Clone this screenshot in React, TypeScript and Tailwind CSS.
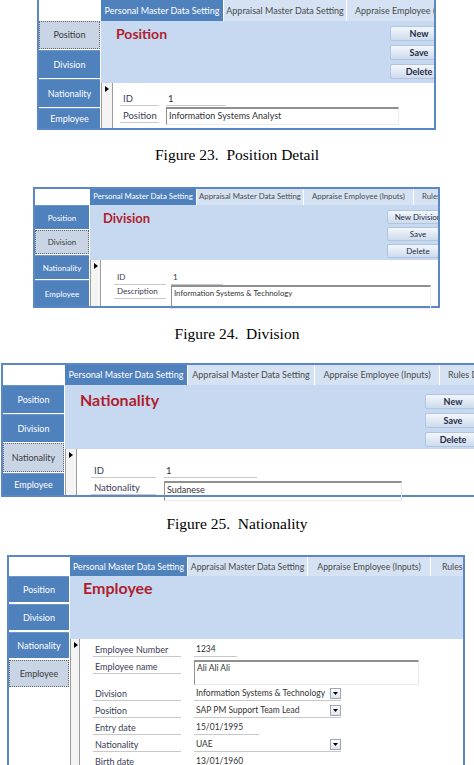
import clsx from "clsx";
import type { ReactNode } from "react";

function Tri() {
  return (
    <svg width="4" height="6" viewBox="0 0 4 6" className="block">
      <path d="M0 0L4 3L0 6Z" fill="#000" />
    </svg>
  );
}

function NavItem({ label, active, cls }: { label: string; active?: boolean; cls: string }) {
  return (
    <div
      className={clsx(
        "flex items-center justify-center shrink-0 whitespace-nowrap",
        cls,
        active
          ? "bg-[#c9d5e5] text-[#3b3b3b] border border-dotted border-[#666]"
          : "bg-[#4f81bd] text-white border-t border-[#6d97cb]"
      )}
    >
      {label}
    </div>
  );
}

function Tab({ label, active, cls }: { label: string; active?: boolean; cls: string }) {
  return (
    <div
      className={clsx(
        "flex items-center whitespace-nowrap overflow-hidden shrink-0",
        cls,
        active ? "bg-[#4f81bd] text-white" : "bg-[#d5e2f3] text-[#4a4a4a] border-l border-white"
      )}
    >
      {label}
    </div>
  );
}

function Btn({ label, cls }: { label: string; cls: string }) {
  return (
    <div
      className={clsx(
        "flex items-center justify-center shrink-0 whitespace-nowrap rounded-[2px] border border-[#b2c5de] bg-linear-to-b from-[#f3f7fc] to-[#cddbed] text-[#1f2a44]",
        cls
      )}
    >
      {label}
    </div>
  );
}

function Selector({ cls }: { cls: string }) {
  return (
    <div className={clsx("shrink-0 border-l border-r border-[#9c9c9c] bg-[#f4f4f4] pt-[3px] pl-[3px]", cls)}>
      <Tri />
    </div>
  );
}

// label / value cells sit on a thin grey underline, text close to it
function Lbl({ children, cls }: { children: ReactNode; cls: string }) {
  return (
    <div className={clsx("shrink-0 border-b border-[#c8c8c8] flex items-end pb-[1px] leading-[11px] pl-[2px] text-[#3c3c55] whitespace-nowrap", cls)}>
      {children}
    </div>
  );
}

function Val({ children, cls }: { children: ReactNode; cls: string }) {
  return (
    <div className={clsx("shrink-0 border-b border-[#c8c8c8] flex items-end pb-[1px] leading-[11px] pl-[2px] text-[#333] whitespace-nowrap", cls)}>
      {children}
    </div>
  );
}

function TextBox({ children, cls }: { children: ReactNode; cls: string }) {
  return (
    <div
      className={clsx(
        "shrink-0 border-t-2 border-l border-r border-b border-t-[#8f8f8f] border-l-[#8f8f8f] border-r-[#ebebeb] border-b-[#ebebeb] pl-[2px] text-[#333] whitespace-nowrap",
        cls
      )}
    >
      {children}
    </div>
  );
}

function DD() {
  return (
    <div className="w-[11px] h-[11px] shrink-0 border border-[#9aa7b8] bg-linear-to-b from-white to-[#dde3ea] flex items-center justify-center">
      <svg width="5" height="3" viewBox="0 0 5 3" className="block">
        <path d="M0 0H5L2.5 3Z" fill="#000" />
      </svg>
    </div>
  );
}

function Combo({ text }: { text: string }) {
  return (
    <div className="ml-[13px] flex items-end pb-[1px] border-b border-[#c8c8c8] h-[17px] w-[147px]">
      <div className="w-[136px] pl-[2px] leading-[11px] text-[8.5px] text-[#333] whitespace-nowrap overflow-hidden">{text}</div>
      <DD />
    </div>
  );
}

function Caption({ text, cls }: { text: string; cls: string }) {
  return (
    <div className={clsx("text-center font-['Liberation_Serif',serif] text-[15.5px] leading-[18px] text-black", cls)}>
      {text}
    </div>
  );
}

export default function App() {
  return (
    <div className="w-[474px] h-[765px] overflow-hidden bg-white font-['Lato','Open_Sans',sans-serif]">
      {/* Figure 23 */}
      <div className="ml-[37px] w-[399px] h-[130px] border-x-2 border-b-2 border-[#5b88c4] flex bg-white">
        <div className="w-[61px] shrink-0 flex flex-col text-[9px]">
          <div className="h-[21px] shrink-0" />
          <NavItem label="Position" active cls="h-[28px]" />
          <NavItem label="Division" cls="h-[28px] mt-px" />
          <NavItem label="Nationality" cls="h-[28px] mt-px" />
          <NavItem label="Employee" cls="flex-1 mt-px" />
        </div>
        <div className="flex-1 min-w-0 flex flex-col border-l border-white">
          <div className="h-[21px] shrink-0 flex text-[9px]">
            <Tab label="Personal Master Data Setting" active cls="w-[122px] justify-center" />
            <Tab label="Appraisal Master Data Setting" cls="w-[123px] justify-center" />
            <Tab label="Appraise Employee (Inputs)" cls="flex-1 pl-[8px]" />
          </div>
          <div className="h-[62px] shrink-0 bg-[#c6d9f1] flex justify-between">
            <div className="pl-[15px] pt-[4px] text-[14px] leading-[18px] font-bold text-[#b01e2e]">Position</div>
            <div className="w-[44px] overflow-hidden pt-[5px] flex flex-col gap-[4px] text-[9px] font-bold">
              <Btn label="New" cls="w-[58px] h-[15px]" />
              <Btn label="Save" cls="w-[58px] h-[15px]" />
              <Btn label="Delete" cls="w-[58px] h-[15px]" />
            </div>
          </div>
          <div className="flex-1 flex min-h-0">
            <Selector cls="w-[12px]" />
            <div className="pl-[7px] pt-[6px] text-[9.5px] flex flex-col">
              <div className="flex">
                <Lbl cls="w-[39px] h-[17px] pl-[3px]">ID</Lbl>
                <Val cls="ml-[7px] w-[60px] h-[17px]">1</Val>
              </div>
              <div className="flex">
                <Lbl cls="w-[39px] h-[17px] pl-[3px]">Position</Lbl>
                <TextBox cls="ml-[7px] w-[233px] h-[18px] mt-px leading-[14px] text-[9px]">
                  Information Systems Analyst
                </TextBox>
              </div>
            </div>
          </div>
        </div>
      </div>
      <Caption text={"Figure 23.\u00a0 Position Detail"} cls="h-[57px] pt-[16px]" />

      {/* Figure 24 */}
      <div className="ml-[33px] w-[407px] h-[121px] border-2 border-[#5b88c4] flex bg-white">
        <div className="w-[54px] shrink-0 flex flex-col text-[8px]">
          <div className="h-[16px] shrink-0" />
          <NavItem label="Position" cls="h-[24px]" />
          <NavItem label="Division" active cls="h-[24px] mt-px" />
          <NavItem label="Nationality" cls="h-[24px] mt-px" />
          <NavItem label="Employee" cls="flex-1 mt-px" />
        </div>
        <div className="flex-1 min-w-0 flex flex-col border-l border-white">
          <div className="h-[16px] shrink-0 flex text-[7.8px]">
            <Tab label="Personal Master Data Setting" active cls="w-[106px] justify-center" />
            <Tab label="Appraisal Master Data Setting" cls="w-[107px] justify-center" />
            <Tab label="Appraise Employee (Inputs)" cls="w-[110px] justify-center" />
            <Tab label="Rules Definition" cls="flex-1 pl-[8px]" />
          </div>
          <div className="h-[55px] shrink-0 bg-[#c6d9f1] flex justify-between">
            <div className="pl-[13px] pt-[5px] text-[13px] leading-[16px] font-bold text-[#b01e2e]">Division</div>
            <div className="w-[51px] overflow-hidden pt-[5px] flex flex-col gap-[3px] text-[8px] text-[#444]">
              <Btn label="New Division" cls="w-[62px] h-[14px]" />
              <Btn label="Save" cls="w-[62px] h-[14px]" />
              <Btn label="Delete" cls="w-[62px] h-[14px]" />
            </div>
          </div>
          <div className="flex-1 flex min-h-0">
            <Selector cls="w-[11px]" />
            <div className="pl-[13px] pt-[11px] text-[8px] flex flex-col">
              <div className="flex">
                <Lbl cls="w-[52px] h-[14px] pl-[3px]">ID</Lbl>
                <Val cls="ml-[5px] w-[52px] h-[14px]">1</Val>
              </div>
              <div className="flex">
                <Lbl cls="w-[52px] h-[14px] pl-[3px]">Description</Lbl>
                <TextBox cls="ml-[5px] w-[260px] h-[24px] leading-[12px] text-[7.8px]">
                  Information Systems &amp; Technology
                </TextBox>
              </div>
            </div>
          </div>
        </div>
      </div>
      <Caption text={"Figure 24.\u00a0 Division"} cls="h-[55px] pt-[17px]" />

      {/* Figure 25 */}
      <div className="ml-[1px] w-[490px] h-[134px] border-2 border-[#5b88c4] flex bg-white">
        <div className="w-[61px] shrink-0 flex flex-col text-[9px]">
          <div className="h-[20px] shrink-0" />
          <NavItem label="Position" cls="h-[28px]" />
          <NavItem label="Division" cls="h-[28px] mt-px" />
          <NavItem label="Nationality" active cls="h-[29px] mt-px" />
          <NavItem label="Employee" cls="flex-1 mt-px" />
        </div>
        <div className="flex-1 min-w-0 flex flex-col border-l border-white">
          <div className="h-[20px] shrink-0 flex text-[9px]">
            <Tab label="Personal Master Data Setting" active cls="w-[122px] justify-center" />
            <Tab label="Appraisal Master Data Setting" cls="w-[127px] justify-center" />
            <Tab label="Appraise Employee (Inputs)" cls="w-[125px] justify-center" />
            <Tab label="Rules Definition" cls="flex-1 pl-[8px]" />
          </div>
          <div className="h-[64px] shrink-0 bg-[#c6d9f1] flex">
            <div className="flex-1 pl-[15px] pt-[5px] text-[16px] leading-[20px] font-bold text-[#b01e2e]">Nationality</div>
            <div className="w-[64px] pt-[9px] flex flex-col gap-[4px] text-[9px] font-bold">
              <Btn label="New" cls="w-[56px] h-[15px]" />
              <Btn label="Save" cls="w-[56px] h-[15px]" />
              <Btn label="Delete" cls="w-[56px] h-[15px]" />
            </div>
          </div>
          <div className="flex-1 flex min-h-0">
            <Selector cls="w-[12px]" />
            <div className="pl-[14px] pt-[12px] text-[9.5px] flex flex-col">
              <div className="flex">
                <Lbl cls="w-[65px] h-[17px] pl-[3px]">ID</Lbl>
                <Val cls="ml-[8px] w-[93px] h-[17px]">1</Val>
              </div>
              <div className="flex">
                <Lbl cls="w-[65px] h-[17px] pl-[3px]">Nationality</Lbl>
                <TextBox cls="ml-[8px] w-[238px] h-[20px] mt-[3px] leading-[14px] text-[9px]">Sudanese</TextBox>
              </div>
            </div>
          </div>
        </div>
      </div>
      <Caption text={"Figure 25.\u00a0 Nationality"} cls="h-[58px] pt-[18px]" />

      {/* Figure 26 */}
      <div className="ml-[7px] w-[458px] h-[230px] border-x-2 border-t-2 border-[#5b88c4] flex bg-white">
        <div className="w-[60px] shrink-0 flex flex-col text-[9px]">
          <div className="h-[19px] shrink-0" />
          <NavItem label="Position" cls="h-[26px]" />
          <NavItem label="Division" cls="h-[26px] mt-[2px]" />
          <NavItem label="Nationality" cls="h-[26px] mt-[2px]" />
          <NavItem label="Employee" active cls="h-[27px] mt-[2px]" />
        </div>
        <div className="flex-1 min-w-0 flex flex-col border-l border-white">
          <div className="h-[19px] shrink-0 flex text-[8.7px]">
            <Tab label="Personal Master Data Setting" active cls="w-[117px] justify-center" />
            <Tab label="Appraisal Master Data Setting" cls="w-[120px] justify-center" />
            <Tab label="Appraise Employee (Inputs)" cls="w-[123px] justify-center" />
            <Tab label="Rules Definition" cls="flex-1 pl-[11px]" />
          </div>
          <div className="h-[63px] shrink-0 bg-[#c6d9f1]">
            <div className="pl-[13px] pt-[2px] text-[16px] leading-[20px] font-bold text-[#b01e2e]">Employee</div>
          </div>
          <div className="flex-1 flex min-h-0">
            <Selector cls="w-[10px]" />
            <div className="pl-[13px] pt-[1px] text-[9px] flex flex-col">
              <div className="flex">
                <Lbl cls="w-[88px] h-[17px]">Employee Number</Lbl>
                <Val cls="ml-[13px] w-[43px] h-[17px] text-[8.5px]">1234</Val>
              </div>
              <div className="flex h-[27px]">
                <Lbl cls="w-[88px] h-[17px]">Employee name</Lbl>
                <TextBox cls="ml-[13px] w-[225px] h-[25px] mt-[3px] leading-[12px] text-[8.5px]">Ali Ali Ali</TextBox>
              </div>
              <div className="flex">
                <Lbl cls="w-[88px] h-[17px]">Division</Lbl>
                <Combo text="Information Systems & Technology" />
              </div>
              <div className="flex">
                <Lbl cls="w-[88px] h-[17px]">Position</Lbl>
                <Combo text="SAP PM Support Team Lead" />
              </div>
              <div className="flex">
                <Lbl cls="w-[88px] h-[17px]">Entry date</Lbl>
                <Val cls="ml-[13px] w-[65px] h-[17px] text-[8.5px]">15/01/1995</Val>
              </div>
              <div className="flex">
                <Lbl cls="w-[88px] h-[17px]">Nationality</Lbl>
                <Combo text="UAE" />
              </div>
              <div className="flex">
                <Lbl cls="w-[88px] h-[17px]">Birth date</Lbl>
                <Val cls="ml-[13px] w-[65px] h-[17px] text-[8.5px]">13/01/1960</Val>
              </div>
            </div>
          </div>
        </div>
      </div>
    </div>
  );
}
